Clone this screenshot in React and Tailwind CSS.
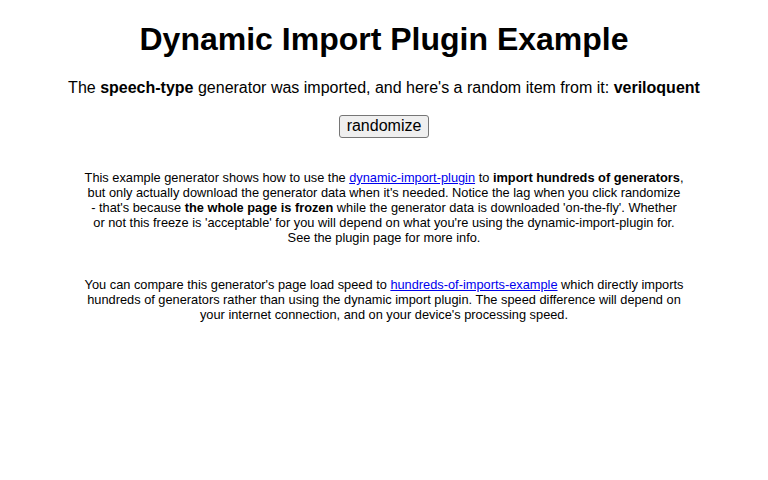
import React, { useState } from 'react';

const WORDS = ['veriloquent', 'grandiloquent', 'magniloquent', 'taciturn', 'voluble'];

const App = () => {
  const [word, setWord] = useState('veriloquent');

  const randomize = () => {
    setWord(WORDS[Math.floor(Math.random() * WORDS.length)]);
  };

  return (
    <div className="min-h-[480px] bg-white text-center text-black font-['Liberation_Sans',Arial,sans-serif]">
      <h1 className="pt-[21px] text-[32px] leading-[37px] font-bold">Dynamic Import Plugin Example</h1>
      <p className="mt-[21px] text-base leading-[18px]">
        The <b>speech-type</b> generator was imported, and here's a random item from it: <b>{word}</b>
      </p>
      <div className="mt-[17px]">
        <button
          onClick={randomize}
          className="h-[23px] px-[7px] text-base leading-[18px] bg-[#efefef] border border-[#767676] rounded-[3px]"
        >
          randomize
        </button>
      </div>
      <div className="mx-auto mt-[32px] max-w-[600px] text-[12.8px] leading-[15px]">
        <p>
          This example generator shows how to use the{' '}
          <a href="#" className="text-[#0000ee] underline">dynamic-import-plugin</a> to{' '}
          <b>import hundreds of generators</b>, but only actually download the generator data when it's needed.
          Notice the lag when you click randomize - that's because <b>the whole page is frozen</b> while the
          generator data is downloaded 'on-the-fly'. Whether or not this freeze is 'acceptable' for you will depend
          on what you're using the dynamic-import-plugin for. See the plugin page for more info.
        </p>
        <p className="mt-[32px]">
          You can compare this generator's page load speed to{' '}
          <a href="#" className="text-[#0000ee] underline">hundreds-of-imports-example</a> which directly imports
          hundreds of generators rather than using the dynamic import plugin. The speed difference will depend on
          your internet connection, and on your device's processing speed.
        </p>
      </div>
    </div>
  );
};

export default App;
